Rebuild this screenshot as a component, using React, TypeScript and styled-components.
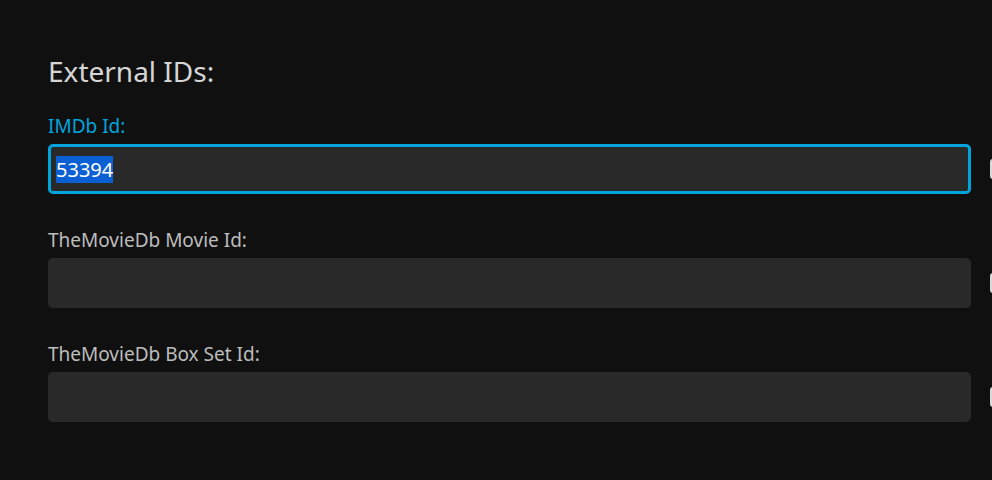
import React, { useEffect, useRef } from "react";
import styled, { createGlobalStyle } from "styled-components";

const Global = createGlobalStyle`
  html, body {
    margin: 0;
    padding: 0;
    background: #101010;
    overflow: hidden;
  }
  body {
    font-family: "Noto Sans", "Open Sans", sans-serif;
    color: rgba(255, 255, 255, 0.87);
  }
`;

const Page = styled.div`
  width: 992px;
  height: 480px;
  box-sizing: border-box;
  padding: 54px 0 0 48px;
  overflow: hidden;
`;

const Heading = styled.h1`
  margin: 0 0 25px;
  font-size: 28px;
  line-height: 34px;
  font-weight: 400;
  color: #d6d6d6;
`;

const Field = styled.div`
  display: flex;
  flex-direction: column;
  margin-bottom: 33px;
`;

const Label = styled.label<{ $active?: boolean }>`
  display: block;
  font-size: 19px;
  line-height: 26px;
  margin-bottom: 5px;
  color: ${(p) => (p.$active ? "#00a4dc" : "#bdbdbd")};
`;

const Row = styled.div`
  display: flex;
  align-items: center;
  gap: 19px;
  width: 960px;
`;

const Input = styled.input<{ $active?: boolean }>`
  flex: 0 0 923px;
  width: 923px;
  height: 50px;
  box-sizing: border-box;
  margin: 0;
  padding: 0 5px;
  border: 3px solid ${(p) => (p.$active ? "#00a4dc" : "transparent")};
  border-radius: 5px;
  background: #292929;
  color: #fff;
  font-family: "Noto Sans", "Open Sans", sans-serif;
  font-size: 20px;
  outline: none;
  &::selection {
    background: #0a5fd2;
    color: #fff;
  }
`;

const SideButton = styled.button`
  flex: 0 0 24px;
  width: 24px;
  height: 20px;
  padding: 0;
  border: none;
  border-radius: 3px;
  background: #d9d9d9;
`;

const fields = [
  { label: "IMDb Id:", value: "53394", active: true },
  { label: "TheMovieDb Movie Id:", value: "", active: false },
  { label: "TheMovieDb Box Set Id:", value: "", active: false },
];

export default function App() {
  const ref = useRef<HTMLInputElement>(null);
  useEffect(() => {
    const el = ref.current;
    if (el) {
      el.focus();
      el.select();
    }
  }, []);
  return (
    <>
      <Global />
      <Page>
        <Heading>External IDs:</Heading>
        {fields.map((f) => (
          <Field key={f.label}>
            <Label $active={f.active}>{f.label}</Label>
            <Row>
              <Input
                ref={f.active ? ref : undefined}
                $active={f.active}
                defaultValue={f.value}
              />
              <SideButton aria-label="search" />
            </Row>
          </Field>
        ))}
      </Page>
    </>
  );
}
